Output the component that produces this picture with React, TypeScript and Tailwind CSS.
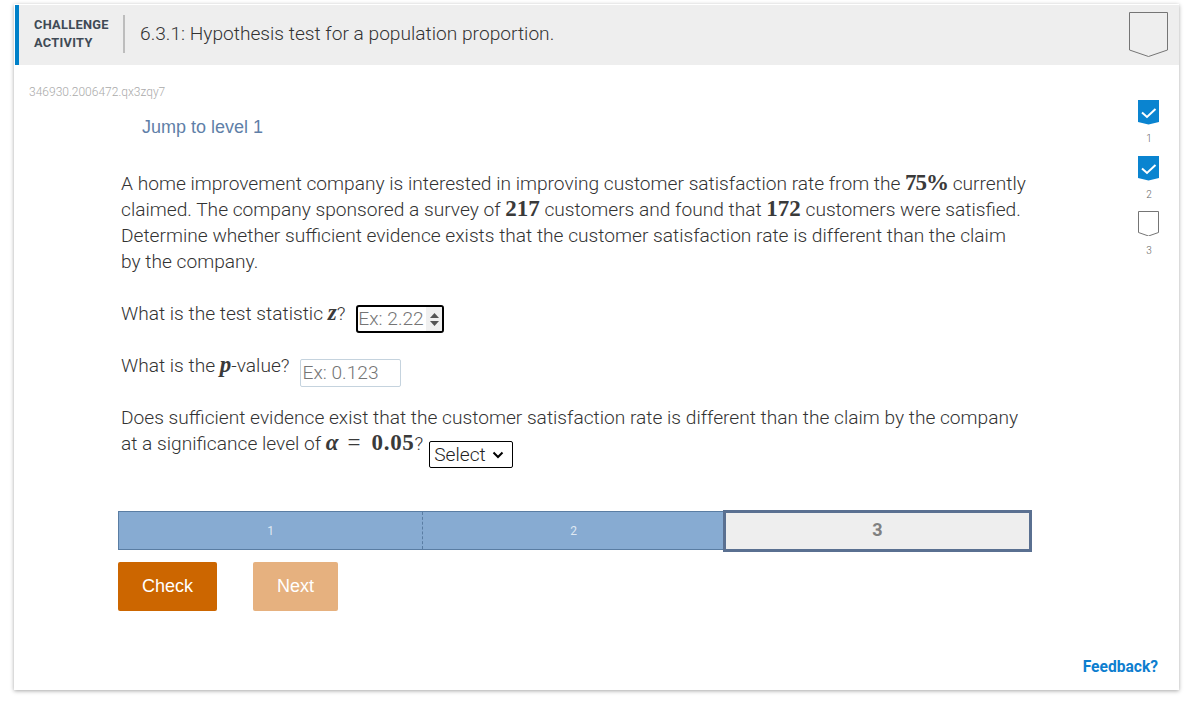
import React from "react";

const M = ({ children, i, className }: { children: React.ReactNode; i?: boolean; className?: string }) => (
  <span className={`font-['Liberation_Serif',serif] text-[#3a3a3a] leading-none text-[23px] font-bold ${i ? "italic" : ""} ${className ?? ""}`}>{children}</span>
);

function Bookmark({ done, n }: { done: boolean; n: number }) {
  return (
    <div className={`flex flex-col items-center ${n === 1 ? "h-[56px]" : "h-[55px]"}`}>
      <svg width="22" height="25" viewBox="0 0 22 25" className="block">
        {done ? (
          <>
            <path d="M0 0H21V22L10.5 24.5L0 22Z" fill="#0a84d0" />
            <path d="M4 12.5L9 17L17.5 9" fill="none" stroke="#fff" strokeWidth="2" />
          </>
        ) : (
          <path d="M0.5 0.5H20.5V21.5L10.5 25L0.5 21.5Z" fill="#fff" stroke="#757575" />
        )}
      </svg>
      <span className={`text-[10px] leading-[12px] text-[#666] font-light ${n === 3 ? "mt-[9px]" : "mt-[8px]"}`}>{n}</span>
    </div>
  );
}

export default function App() {
  return (
    <div className="bg-white w-[1190px] h-[707px] pt-[4px] pl-[14px] font-['Roboto',sans-serif] overflow-hidden">
      <div className="relative w-[1165px] h-[686px] bg-white shadow-[0_1px_4px_rgba(0,0,0,0.35)] flex flex-col">
        <header className="h-[60px] mt-[1px] bg-[#eeeeee] flex items-center ml-[1px] border-l-[4px] border-[#0081c9]">
          <div className="w-[104px] pl-[15px] mt-[-3px] text-[12.8px] leading-[18px] tracking-[0.3px] font-bold text-[#3f4a55]">
            CHALLENGE<br />ACTIVITY
          </div>
          <div className="w-[2px] h-[38px] bg-[#bdbdbd] mt-[-2px]" />
          <h1 className="ml-[15px] text-[19.16px] font-light text-[#333] mt-[-2px]">6.3.1: Hypothesis test for a population proportion.</h1>
          <svg width="40" height="46" viewBox="0 0 40 46" className="ml-auto mr-[10px] mt-[-1px]">
            <path d="M0.5 0.5H38.5V38L19.5 44.5L0.5 38Z" fill="#eeeeee" stroke="#757575" strokeWidth="1" />
          </svg>
        </header>

        <div className="flex-1 flex">
          <main className="w-[1030px]">
            <p className="ml-[15px] mt-[19px] text-[12px] leading-[16px] font-light text-[#aaa]">346930.2006472.qx3zqy7</p>
            <p className="ml-[128px] mt-[15px] text-[18px] leading-[24px] font-['Liberation_Sans',sans-serif] text-[#5f7fa8]">Jump to level 1</p>

            <div className="ml-[107px] mt-[32px] w-[909px] text-[19.16px] leading-[26px] font-light text-[#333]">
              <p>
                A home improvement company is interested in improving customer satisfaction rate from the <M className="tracking-[-1px]">75%</M> currently claimed. The company sponsored a survey of <M>217</M> customers and found that <M>172</M> customers were satisfied. Determine whether sufficient evidence exists that the customer satisfaction rate is different than the claim by the company.
              </p>
              <div className="mt-[26px] flex items-start h-[26px]">
                <span>What is the test statistic <M i>z</M>?</span>
                <div className="ml-[11px] mt-[4px] w-[88px] h-[28px] border-[2px] border-black rounded-[3px] flex items-center overflow-hidden bg-white">
                  <span className="text-[#757575] flex-1 leading-[24px] whitespace-nowrap">Ex: 2.22</span>
                  <span className="w-[16px] h-full bg-[#f0f0f0] flex flex-col items-center justify-center gap-[3px]">
                    <svg width="9" height="5" viewBox="0 0 9 5"><path d="M4.5 0L9 5H0Z" fill="#555" /></svg>
                    <svg width="9" height="5" viewBox="0 0 9 5"><path d="M4.5 5L9 0H0Z" fill="#555" /></svg>
                  </span>
                </div>
              </div>
              <div className="mt-[26px] flex items-start h-[26px]">
                <span>What is the <M i>p</M>-value?</span>
                <div className="ml-[10px] mt-[6px] w-[101px] h-[28px] border border-[#c5d3de] rounded-[2px] pl-[2px] text-[#757575] leading-[26px]">Ex: 0.123</div>
              </div>
              <div className="mt-[26px]">
                <p>Does sufficient evidence exist that the customer satisfaction rate is different than the claim by the company</p>
                <div className="flex items-start h-[26px]">
                  <span>at a significance level of <M i className="mr-[2px]">α</M><span className="font-['Liberation_Serif',serif] text-[23px] leading-none ml-[7px] mr-[11px] text-[#3a3a3a]">=</span><M className="tracking-[0.7px]">0.05</M>?</span>
                  <div className="ml-[6px] mt-[10px] w-[84px] h-[27px] border border-black rounded-[2px] flex items-center pl-[4px] text-[#222] leading-[24px] font-light gap-[6px]">
                    Select
                    <svg width="12" height="8" viewBox="0 0 12 8"><path d="M1.5 1.5L6 6L10.5 1.5" fill="none" stroke="#000" strokeWidth="2" /></svg>
                  </div>
                </div>
              </div>
            </div>

            <div className="ml-[104px] mt-[53px] w-[914px] h-[42px] flex">
              <div className="w-[304px] mt-[1px] h-[39px] bg-[#87abd2] border border-[#5a7da3] border-r-0 flex items-center justify-center text-[12px] text-[#dfe8f2]">1</div>
              <div className="w-[301px] mt-[1px] h-[39px] bg-[#87abd2] border-y border-[#5a7da3] relative flex items-center justify-center pl-[2px] text-[12px] text-[#dfe8f2]">
                <span className="absolute left-0 top-0 bottom-0 border-l border-dashed border-[#5a7da3]" />
                2
              </div>
              <div className="flex-1 bg-[#eeeeee] border-[3px] border-[#5a7091] flex items-center justify-center pb-[3px] text-[18px] font-bold text-[#808080]">3</div>
            </div>

            <div className="ml-[104px] mt-[10px] flex gap-[36px] font-['Liberation_Sans',sans-serif]">
              <button className="w-[99px] h-[49px] bg-[#cc6600] rounded-[2px] text-white text-[18px]">Check</button>
              <button className="w-[85px] h-[49px] bg-[#e6b17f] rounded-[2px] text-white text-[18px]">Next</button>
            </div>
          </main>

          <aside className="flex-1 relative">
            <div className="ml-[94px] mt-[35px] w-[22px]">
              <Bookmark done n={1} />
              <Bookmark done n={2} />
              <Bookmark done={false} n={3} />
            </div>
            <a className="absolute right-[21px] bottom-[13px] text-[15.6px] leading-[20px] font-bold text-[#0d7ecf]">Feedback?</a>
          </aside>
        </div>
      </div>
    </div>
  );
}
